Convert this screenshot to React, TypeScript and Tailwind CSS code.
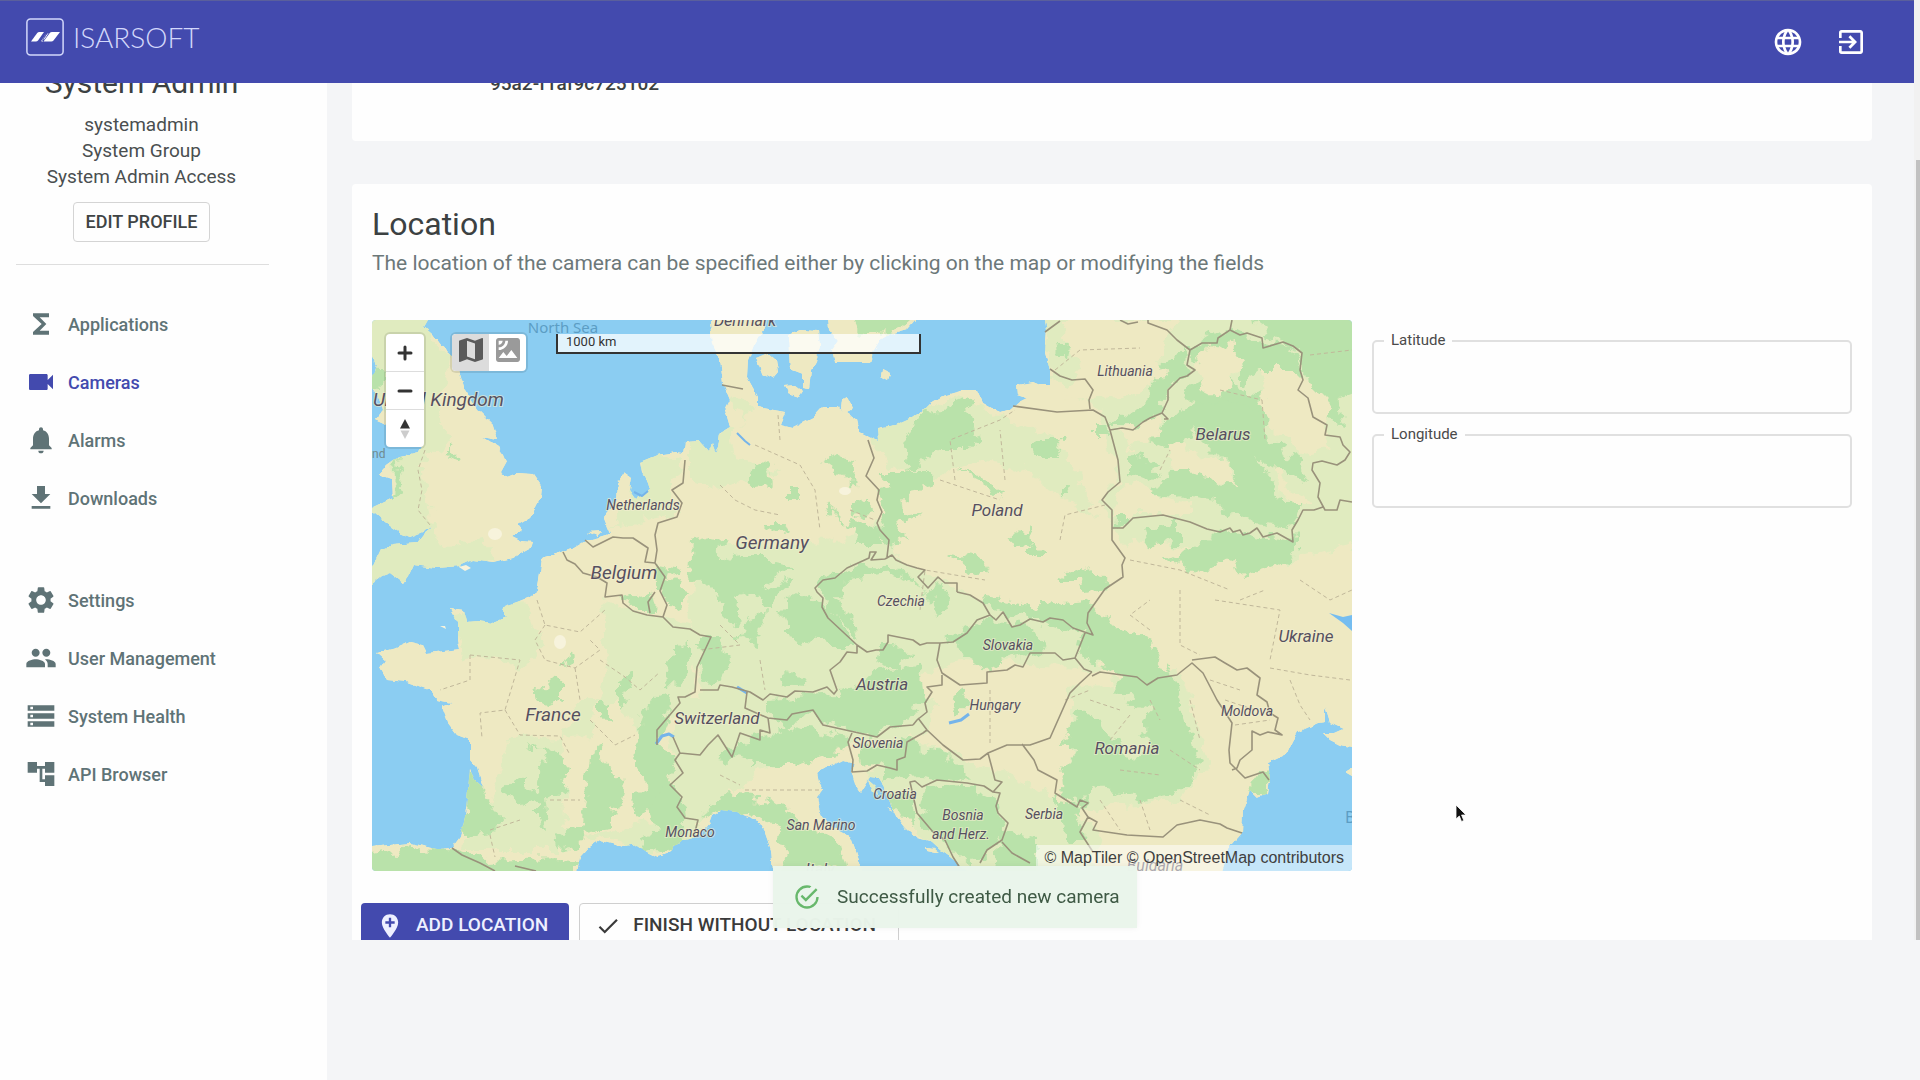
import React from "react";
import type { IconType } from "react-icons";
import {
  MdAccountTree,
  MdCheck,
  MdExitToApp,
  MdFileDownload,
  MdFunctions,
  MdLanguage,
  MdMap,
  MdNotifications,
  MdPeople,
  MdSatellite,
  MdSettings,
  MdStorage,
  MdVideocam,
} from "react-icons/md";

type NavItem = { label: string; icon: IconType; active?: boolean };

const MAIN_NAV: NavItem[] = [
  { label: "Applications", icon: MdFunctions },
  { label: "Cameras", icon: MdVideocam, active: true },
  { label: "Alarms", icon: MdNotifications },
  { label: "Downloads", icon: MdFileDownload },
];

const ADMIN_NAV: NavItem[] = [
  { label: "Settings", icon: MdSettings },
  { label: "User Management", icon: MdPeople },
  { label: "System Health", icon: MdStorage },
  { label: "API Browser", icon: MdAccountTree },
];

function Logo() {
  return (
    <a href="#home" className="flex items-center gap-[9px] text-[#d3d8fb]">
      <svg viewBox="0 0 38 38" className="size-[38px]" fill="none" aria-hidden="true">
        <rect x="0.9" y="0.9" width="36.2" height="36.2" rx="3.5" stroke="currentColor" strokeWidth="1.5" />
        <path d="M5 23.5 11.2 15Q12 14 13.4 14H18L12 22.4Q11.200 23.500 9.800 23.500Z" fill="#fff" />
        <path d="M16.500 23.500Q15.300 23.500 16 22.400L20 16.500M18 21.500 22 15.200" stroke="#fff" strokeWidth="0.9" />
        <path d="M17.500 23.500 23.800 15Q24.500 14 26 14H34L27.500 22.400Q26.700 23.500 25.300 23.500Z" fill="#fff" />
        <path d="M16.500 21.500 21.500 14.500" stroke="#434aae" strokeWidth="1" />
      </svg>
      <span className="font-['Lato'] text-[28px] leading-[38px] font-light">ISARSOFT</span>
    </a>
  );
}

function Header() {
  return (
    <header className="mr-[6px] flex h-[83px] shrink-0 items-center justify-between border-t border-[#5a5f9c] bg-[#434aae] pr-[47px] pl-[26px]">
      <div className="pb-[10px]">
        <Logo />
      </div>
      <div className="flex items-center gap-[31px] text-white">
        <button type="button" aria-label="Language">
          <MdLanguage className="size-8" />
        </button>
        <button type="button" aria-label="Log out">
          <MdExitToApp className="size-8" />
        </button>
      </div>
    </header>
  );
}

function NavList({ items }: { items: NavItem[] }) {
  return (
    <ul>
      {items.map(({ label, icon: Icon, active }) => (
        <li key={label}>
          <a
            href="#nav"
            className={
              active
                ? "flex h-[58px] items-center gap-[11px] text-[#434aae]"
                : "flex h-[58px] items-center gap-[11px] text-[#5f7376]"
            }
          >
            <Icon className="size-8" />
            <span className="text-[18px] font-medium">{label}</span>
          </a>
        </li>
      ))}
    </ul>
  );
}

function Sidebar() {
  return (
    <aside className="w-[327px] shrink-0 overflow-hidden bg-[#fefefe] pr-11">
      <div className="-mt-5 flex flex-col items-center text-[19px] leading-[26px] text-[#4a4f50]">
        <h2 className="text-[30px] leading-10 text-[#3c4142]">System Admin</h2>
        <div className="mt-[9px] text-center">
          <p>systemadmin</p>
          <p>System Group</p>
          <p>System Admin Access</p>
        </div>
        <button
          type="button"
          className="mt-3 h-10 rounded-[4px] border border-[#d4d4d4] px-3 text-[18px] font-medium text-[#3f4445]"
        >
          EDIT PROFILE
        </button>
      </div>
      <hr className="mt-[22px] ml-4 mr-[14px] border-[#dedede]" />
      <nav className="mt-[30px] flex flex-col gap-11 pl-[25px]">
        <NavList items={MAIN_NAV} />
        <NavList items={ADMIN_NAV} />
      </nav>
    </aside>
  );
}

const UK =
  "M355 305H428V320L424 327 432 334 440 345 455 358 460 373 465 390 478 410 493 425 498 440 482 437 490 442 498 447 504 455 507 462 501 473 507 477 517 473 533 474 542 487 541 497 536 507 530 518 518 525 522 530 512 537 520 541 533 542 531 548 513 558 493 563 473 560 460 566 437 568 413 565 408 576 403 583 390 573 382 576 372 584 358 590V567H372L380 550 393 545 417 543 424 534 433 527 420 533 410 537 400 533 390 526 380 518 372 511V508L393 498 392 480 378 475 386 466 397 458 417 453 421 447 414 440 400 436 386 425 375 420 383 410 380 399 372 388V377L376 365 372 356 355 350Z";

const MAINLAND =
  "M710 305V320L712 343 720 360 723 383 730 400 725 410 730 427 720 433 718 447 715 452 712 444 709 451 700 441 685 442 683 453 677 452 657 455 640 462 642 473 648 483 650 490 644 494 637 500 630 490 632 477 625 472 618 483 617 500 603 517 607 527 610 534 600 537 587 540 574 548 563 552 542 558 540 573 537 591 527 598 517 602 505 606 503 612 507 617 493 623 478 621 467 622 464 610 450 608 458 622 458 640 460 649 444 651 427 653 423 645 410 642 397 648 377 653 385 660 380 668 387 680 407 682 430 690 437 700 452 703 442 707 448 723 457 735 470 740 470 760 477 768 483 787 475 780 470 770 467 800 465 817 460 837 452 848 438 849 427 847 410 843 390 845 372 847 355 847V885H577V871L580 857 588 848 600 840 612 843 623 847 637 845 647 852 657 857 670 853 675 845 682 840 700 835 710 823 713 815 720 810 737 812 757 820 765 833 771 850 773 871V885H862V871L860 863 852 840 843 833 833 828 822 817 819 808 817 798 823 790 819 783 817 773 824 768 833 765 843 760 855 763 852 773 855 785 860 793 865 785 870 777 878 778 887 793 892 807 897 817 906 828 917 838 930 841 940 850 950 857 960 865 966 871V885H1222V871L1230 847 1242 833 1243 810 1250 790 1257 797 1268 793 1270 780 1268 762 1287 753 1292 742 1298 732 1318 723 1325 722 1325 707 1330 723 1343 729 1334 733 1323 733 1330 740 1340 745 1352 747H1370V305H1045V320L1047 330 1045 353 1050 370 1050 385 1040 385 1033 382 1028 383 1017 385 1018 395 1027 398 1019 402 1010 410 1000 413 990 407 983 403 977 390 965 390 953 393 940 397 930 403 922 411 913 417 895 425 877 428 878 441 870 437 860 432 857 420 847 413 837 407 823 407 813 418 793 428 780 425 785 412 774 410 758 407 758 397 747 377 748 360 754 345 763 330 767 320V305Z";

const ISLANDS = [
  "M756 358L768 353 776 360 778 372 772 379 762 374Z",
  "M788 335L800 330 818 331 820 345 816 362 811 371 809 389 803 388 803 374 790 369Z",
  "M785 386L795 385 803 391 799 397 788 393Z",
  "M827 305H916V320L908 329 890 334 880 340 874 350 870 362 835 362 832 350 838 342 829 330Z",
  "M882 370L890 374 888 380 881 376Z",
  "M842 400L847 397 853 409 847 413 841 409Z",
  "M588 532L602 531 597 536Z",
  "M868 780L875 786 878 796 872 791ZM887 806L894 813 890 811ZM925 848L935 849 940 853 926 850Z",
  "M1345 772L1352 768H1370V776H1352Z",
];

const LIGHT_GREEN = [
  "M355 305H425L432 340 450 360 445 385 432 400 450 440 440 455 420 450 430 520 445 545 480 540 500 562 355 594V505L395 495 392 455 410 440 380 400Z",
  "M455 615L520 600 545 640 520 670 490 655 465 660Z",
  "M600 600L700 630 690 700 640 735 620 700 580 700 560 740 570 850 460 850 500 770 510 740 590 735 610 660Z",
  "M640 460L683 455 672 490 680 515 610 525 630 500Z",
  "M690 442L730 425 735 460 780 470 720 490 690 480Z",
  "M730 395L752 405 740 425Z",
  "M580 835L700 815 700 840 650 857 620 845Z",
  "M700 540L830 545 880 520 900 560 980 600 1090 620 1100 670 960 660 870 700 700 700 690 630Z",
  "M870 430L960 395 1010 420 1060 440 1100 520 1020 470 980 460 930 480 890 470Z",
  "M1045 305H1380V540L1290 560 1120 540 1100 500 1120 480 1100 410 1050 380Z",
  "M680 700L830 690 940 700 900 760 840 745 760 770 690 830 670 780Z",
  "M860 775L920 740 990 770 1040 790 1100 830 1090 885H970L900 815Z",
  "M1070 690L1180 670 1210 760 1180 800 1070 810Z",
];

const CLEARINGS = [
  "M1060 322L1180 322 1160 345 1165 375 1130 395 1060 400 1080 370Z",
  "M1205 350L1230 340 1240 365 1225 400 1205 390 1195 370ZM1262 370L1295 370 1330 405 1320 430 1330 450 1300 455 1270 425 1265 400Z",
  "M1120 430L1160 415 1155 440 1130 450ZM1170 440L1225 465 1238 485 1200 480 1170 465ZM1125 480L1190 505 1195 515 1110 515ZM1270 465L1310 505 1290 505Z",
];

const FOREST = [
  "M400 430L405 445 398 460 402 490 395 500 396 475ZM448 448L456 452 458 460 448 456ZM360 368L382 372 384 388 360 386Z",
  "M465 772L475 775 490 805 504 820 498 828 462 838Z",
  "M535 690L545 682 562 684 562 703 552 706 536 697Z",
  "M500 788L525 775 525 785 535 790 545 750 530 750 528 748 555 750 568 760 562 790 545 793 548 826 540 820 540 800 520 805Z",
  "M560 663L573 655 575 663 568 667Z",
  "M600 700L610 698 610 718 600 716ZM620 680L632 675 625 710 620 705ZM558 835L575 828 585 830 584 845 560 850Z",
  "M590 750L600 745 605 770 622 785 612 825 580 830 585 800 586 780Z",
  "M645 705L672 693 665 720 655 745 672 760 668 790 660 800 640 820 630 800 645 785 637 760 640 725Z",
  "M675 655L690 640 690 660 680 688 665 687 666 670ZM664 780L682 800 686 830 680 845 660 857 640 845 655 830 650 810Z",
  "M355 855L420 848 450 850 480 860 560 858 577 860V885H355Z",
  "M748 470L767 458 772 480 760 492 745 482ZM823 460L835 450 858 465 855 485 845 480 840 472ZM790 490L800 490 800 500 790 500Z",
  "M763 520L785 520 793 530 775 532ZM818 510L825 500 830 515ZM855 505L870 498 876 515 850 520Z",
  "M690 542L725 535 715 550 745 560 770 560 790 565 760 590 790 580 770 610 745 590 725 605 700 580 688 575Z",
  "M655 565L680 570 665 580 690 590 680 605 665 600ZM620 595L650 590 655 610 640 610Z",
  "M720 600L740 590 735 625 722 615ZM745 620L765 610 760 645 740 640ZM700 640L720 640 727 660 712 690 702 680Z",
  "M785 600L800 590 835 615 855 645 825 645 785 635ZM790 635L780 610 790 600Z",
  "M878 490L920 478 900 500 920 515 895 525 910 540 890 545 877 530 885 505ZM820 500L840 520 875 525 885 545 850 545 855 530Z",
  "M900 440L920 420 960 400 975 395 970 410 980 440 965 450 935 450 920 470 905 475 910 455ZM880 475L925 475 938 485 900 492Z",
  "M960 470L985 475 1008 495 1005 500 980 480ZM950 555L985 560 990 570 975 575ZM1010 535L1028 528 1030 550 1015 545Z",
  "M817 585L835 575 860 565 900 568 925 590 940 585 950 600 935 620 930 590 890 575 850 580 835 600 855 620 860 640 830 610Z",
  "M880 645L910 650 900 670 875 660ZM785 670L810 672 805 690 780 688Z",
  "M770 700L835 695 880 670 920 665 925 700 910 720 870 735 825 720 810 712 780 730 770 715ZM840 690L900 685 890 710 840 710Z",
  "M745 740L770 735 800 725 850 738 845 748 790 765 750 765 720 760Z",
  "M855 745L905 745 900 770 875 762 860 768ZM905 740L950 755 975 780 920 775 880 780Z",
  "M700 820L730 795 770 800 810 830 840 840 850 885H775L790 850 768 820 735 810Z",
  "M925 790L960 785 995 800 998 815 1008 825 985 850 970 868 940 840 920 815ZM890 795L910 800 915 830 900 815Z",
  "M945 640L985 620 1030 625 1045 650 1010 660 985 670 960 650ZM980 595L1030 605 1085 600 1090 625 1070 630 1020 615 990 610ZM960 690L968 700 955 715Z",
  "M1080 605L1110 620 1145 640 1170 675 1185 720 1190 750 1200 755 1195 780 1165 795 1140 800 1120 790 1090 785 1080 806 1062 795 1060 770 1075 755 1063 740 1080 710 1100 720 1110 740 1130 760 1150 755 1145 720 1150 705 1110 690 1120 680 1080 650 1085 630Z",
  "M1056 800L1075 805 1085 840 1070 840 1058 825ZM1000 830L1040 840 1040 885H990Z",
  "M1056 345L1070 345 1068 360 1058 355ZM1135 340L1142 345 1138 352ZM1165 360L1180 355 1190 345 1185 370 1170 390 1160 415 1135 425 1110 425 1130 410 1150 390ZM1095 425L1110 425 1112 435 1095 435Z",
  "M1190 350L1230 325 1260 340 1290 345 1300 360 1298 385 1275 385 1260 370 1240 385 1240 360 1225 345 1200 370ZM1195 380L1225 370 1245 395 1270 400 1265 430 1220 415 1200 410 1185 395Z",
  "M1205 400L1260 410 1265 440 1300 460 1310 480 1275 470 1260 460 1280 500 1300 500 1290 530 1240 520 1215 500 1150 490 1170 470 1190 470 1220 485 1235 475 1190 430 1175 450 1150 440 1170 420Z",
  "M1130 455L1160 465 1155 480 1130 470ZM1232 305H1380V380L1330 400 1305 390 1300 350 1270 335ZM1310 400L1340 390 1345 430 1320 420Z",
  "M1145 530L1180 520 1180 540 1150 548ZM1165 560L1200 545 1220 530 1290 540 1300 530 1300 550 1270 570 1240 580 1235 560 1200 570ZM1117 512L1128 508 1130 520 1115 528Z",
  "M1055 580L1075 565 1100 575 1110 588 1090 590 1075 580ZM1030 440L1065 440 1060 455 1035 455ZM1060 487L1072 487 1070 495 1060 495ZM1030 540L1045 555 1030 555Z",
  "M1250 780L1268 775 1268 793 1255 793Z",
  "M845 305H912V320L900 330 860 336Z",
];

const BORDERS =
  "M722 385L743 389M868 440L874 458 866 476 879 490 877 500 882 512 877 523 880 530 889 540 887 557M885 559L871 560 876 552 870 552 869 558 847 568 835 578 823 580 815 588 817 592 823 598 822 607 828 618 857 645 867 652 876 650 883 650 888 642 888 635 913 640 920 645 927 643 940 643 953 642 967 633 977 620 990 615 983 603 970 595 957 592M885 559L892 555 896 560 907 565 917 568 925 570 918 577 928 588 938 577 945 583 957 583 957 592M990 615L996 620 1003 612 1012 627 1020 625 1030 619 1043 622 1050 618 1063 620 1073 628 1093 635 1087 623 1088 613 1105 589 1123 577 1122 565 1125 558 1112 540 1112 510 1102 500 1108 492 1120 482 1118 460 1110 430 1105 417 1093 410 1057 412 1013 406M1050 369L1060 376 1072 380 1085 379 1093 390 1089 400 1090 409M1110 430L1122 428 1133 430 1143 422 1150 418 1162 413 1168 400 1168 390 1180 378 1187 376 1195 370 1187 365 1190 350 1177 340 1167 330 1148 323V320M1162 413L1168 419 1164 419M1190 350L1202 343 1217 343 1218 338 1230 330 1232 320M1230 330L1240 335 1247 333 1262 338 1263 348 1283 342 1293 346 1302 353 1300 370 1303 380 1298 390 1308 398 1313 417 1327 425 1325 435 1340 437 1343 445 1350 452 1345 460 1337 465 1322 461 1313 463 1312 470 1320 483 1318 497 1325 510 1337 510 1340 500 1352 502M1323 507L1314 510 1303 510 1298 520 1292 530 1293 542 1277 533 1263 537 1257 528 1250 533 1243 535 1240 530 1233 532 1230 528 1220 532 1207 529 1190 522 1163 515 1133 518 1123 528 1112 528M1120 320L1128 324 1138 322M1045 332L1060 321M1085 633L1075 658 1084 669 1092 672M1075 658L1063 660 1055 653 1030 653 1023 667 1015 665 1007 670 987 672 987 683 960 685 942 673 937 660 940 643M942 675L942 685 927 687 932 692 925 703 927 712 917 720 913 725M1092 672L1080 683 1070 693 1050 738 1030 745 1007 745 988 753 980 759 963 760 943 745 927 730 918 718M1092 676L1100 672 1137 677 1147 685 1158 678 1177 675 1192 663 1203 673 1217 700 1232 723 1229 750 1230 763 1245 778 1263 772 1269 780M1192 660L1215 657 1225 663 1237 670 1247 668 1260 678 1257 695 1267 702 1270 713 1278 718 1275 730 1282 735 1268 732 1260 735 1252 731 1252 750 1240 760 1237 768 1232 770M1022 744L1034 760 1038 770 1057 780 1055 793 1077 807 1080 800 1088 803 1082 808 1088 817 1097 822 1093 830 1127 835 1163 837 1177 825 1200 820 1220 824 1227 828 1242 833M1088 817L1080 832 1093 852M988 753L992 768 995 780 1002 782 993 792 984 786 967 783 937 780 922 787 915 781 910 782 917 813 933 832 945 840 953 857 960 868M993 792L1000 793 996 806 998 813 1008 823 1002 840 987 850 980 863M1002 842L1012 853 1030 863M857 645L857 653 847 652 840 662 830 670 837 690 834 694 827 687 813 692 795 691 787 697 770 694 763 700 750 692 732 687 720 685 718 690 700 690M747 692L745 708 768 718 787 720 792 714 813 710 823 725 877 737 890 727 913 725M852 733L848 742 853 760 852 772 867 771 877 765 890 768 897 770 897 760 905 757 907 742 923 733 927 730M768 718L770 733 760 730 760 740 740 733 732 757 718 735 708 745 700 755 680 753 673 737M657 745L657 730 680 703 678 697 685 697 695 692 697 667 711 637 700 635 690 629 673 627 663 617 647 615 633 611 623 603 622 595 605 597 607 583 597 577 583 573 575 564 567 560 563 552M585 540L593 547 613 537 623 538 633 538 648 548 645 562 655 563 657 550 655 535 658 523 677 517 682 503 672 490 683 483 685 460M655 563L665 577 660 591 667 605 663 617M655 592L648 602 650 613M680 753L675 760 683 773 670 785 682 797 677 807 685 818 698 820 695 832M452 848L462 855 480 863 495 871M515 866L536 871";

const REGIONS =
  "M425 450L418 470 422 490 418 510 430 525M470 655L470 680 440 690M470 655L520 660 505 710 480 713 482 738M537 600L545 625 580 632 605 610M545 625L535 640 545 660 575 668 600 650 590 640M575 668L580 700M505 710L520 735 560 736 570 755M590 720L615 745 635 735M600 660L625 677 640 690 660 672M490 835L495 857M490 830L520 820M550 800L580 800M720 485L735 500 755 510 780 515M755 445L800 465 815 490 820 530M780 440L778 415M760 660L765 690M720 625L740 645 700 650M850 510L875 520M940 480L970 490 1000 500M955 480L950 440 1000 420 1015 410M1005 480L1000 430M920 610L925 570 985 580M1060 540L1065 515 1105 505M1130 560L1180 570 1230 590M1180 590V645L1200 655M1150 630L1130 615 1150 600M1215 600L1280 610 1270 660M1270 668L1310 675 1350 680M1290 680L1300 705 1310 720M1240 600L1265 590M1300 580L1330 600 1352 590M1220 390L1262 400M1262 400L1265 440M1160 470L1170 450M1310 355L1352 350M1055 370L1080 350 1140 348M1090 700L1120 710M1065 700L1090 690M1110 740L1130 715M1150 700L1160 720M1190 700L1200 740M1170 750L1200 770M1120 770L1160 775M1100 800L1120 830M1140 800L1150 830M1180 800L1210 815M1210 680L1240 690M1225 700L1255 710M1235 725L1270 720M745 790H800L820 790M720 775L740 785M990 690V745";

type MapLabel = { text: string; x: number; y: number; size: number; anchor?: "end" };

const LABELS: MapLabel[] = [
  { text: "United Kingdom", x: 504, y: 406, size: 19, anchor: "end" },
  { text: "Denmark", x: 745, y: 326, size: 16 },
  { text: "Netherlands", x: 643, y: 510, size: 14 },
  { text: "Belgium", x: 624, y: 579, size: 19 },
  { text: "Germany", x: 772, y: 549, size: 19 },
  { text: "Poland", x: 997, y: 516, size: 17 },
  { text: "Czechia", x: 901, y: 606, size: 14 },
  { text: "Lithuania", x: 1125, y: 376, size: 14 },
  { text: "Belarus", x: 1223, y: 440, size: 17 },
  { text: "Ukraine", x: 1306, y: 642, size: 17 },
  { text: "Moldova", x: 1247, y: 716, size: 14 },
  { text: "Romania", x: 1127, y: 754, size: 17 },
  { text: "Hungary", x: 995, y: 710, size: 14 },
  { text: "Slovakia", x: 1008, y: 650, size: 14 },
  { text: "Austria", x: 882, y: 690, size: 17 },
  { text: "Slovenia", x: 878, y: 748, size: 14 },
  { text: "Croatia", x: 895, y: 799, size: 14 },
  { text: "Bosnia", x: 963, y: 820, size: 14 },
  { text: "and Herz.", x: 961, y: 839, size: 14 },
  { text: "Serbia", x: 1044, y: 819, size: 14 },
  { text: "San Marino", x: 821, y: 830, size: 14 },
  { text: "Monaco", x: 690, y: 837, size: 14 },
  { text: "Switzerland", x: 717, y: 724, size: 17 },
  { text: "France", x: 553, y: 721, size: 19 },
  { text: "Italy", x: 820, y: 875, size: 16 },
  { text: "Bulgaria", x: 1155, y: 871, size: 16 },
];

function EuropeMap() {
  return (
    <svg
      viewBox="372 320 980 551"
      preserveAspectRatio="xMidYMid slice"
      className="block h-full w-full"
      role="img"
      aria-label="Map of central Europe"
    >
      <defs>
        <filter id="rough" x="0" y="0" width="1" height="1">
          <feTurbulence type="fractalNoise" baseFrequency="0.06" numOctaves="3" seed="4" />
          <feDisplacementMap in="SourceGraphic" scale="22" xChannelSelector="R" yChannelSelector="G" />
        </filter>
        <filter id="coast" x="0" y="0" width="1" height="1">
          <feTurbulence type="fractalNoise" baseFrequency="0.12" numOctaves="2" seed="9" />
          <feDisplacementMap in="SourceGraphic" scale="5" xChannelSelector="R" yChannelSelector="G" />
        </filter>
        <clipPath id="land">
          <path d={UK} />
          <path d={MAINLAND} />
          {ISLANDS.map((d) => (
            <path key={d} d={d} />
          ))}
        </clipPath>
      </defs>
      <rect x="372" y="320" width="980" height="551" fill="#8bcdf2" />
      <g filter="url(#coast)">
        <rect x="340" y="290" width="1050" height="620" fill="#8bcdf2" />
        <g clipPath="url(#land)">
          <rect x="340" y="290" width="1050" height="620" fill="#eee9c2" />
          <g filter="url(#rough)">
            <rect x="340" y="290" width="1050" height="620" fill="#eee9c2" />
            <g fill="#dcecbf" opacity="0.75">
              {LIGHT_GREEN.map((d) => (
                <path key={d} d={d} />
              ))}
            </g>
            <g fill="#b9e2aa">
              {FOREST.map((d) => (
                <path key={d} d={d} />
              ))}
            </g>
            <g fill="#eee9c2">
              {CLEARINGS.map((d) => (
                <path key={d} d={d} />
              ))}
            </g>
          </g>
        </g>
      </g>
      <g fill="#f7f3dc">
        <ellipse cx="495" cy="534" rx="7" ry="6" />
        <ellipse cx="560" cy="642" rx="6" ry="7" />
        <ellipse cx="845" cy="491" rx="6" ry="4" />
        <path d="M459 567l7-2 5 3-6 3zM440 626l5 0 1 3z" />
      </g>
      <g fill="none" stroke="#75b4ea" strokeWidth="3" strokeLinejoin="round">
        <path d="M656 744l6-8 7-2 5 3M737 687l10 6M949 723l12-3 8-6" />
        <path d="M737 433l8 8 5 4M634 492l8 4 6-5" strokeWidth="2" />
      </g>
      <path d="M1329 613l14 4 9-2v16l-9-8z" fill="#75bdf0" />
      <path d={REGIONS} fill="none" stroke="#c0b79a" strokeWidth="1" strokeDasharray="4 3" />
      <path d={BORDERS} fill="none" stroke="#99927b" strokeWidth="1.600" strokeLinejoin="round" />
      <text x="563" y="333" textAnchor="middle" fontSize="15" fill="#5c9dc4" className="font-['Noto_Sans']">
        North Sea
      </text>
      <text x="372" y="458" fontSize="12" fill="#6f8a90" className="font-['Roboto']">
        nd
      </text>
      <text x="1345" y="823" fontSize="16" fill="#5c9dc4" className="font-['Noto_Sans']">
        Black Sea
      </text>
      <g
        className="font-['Roboto'] italic"
        fill="#565060"
        stroke="#f3efd0"
        strokeWidth="2"
        strokeOpacity="0.6"
        paintOrder="stroke"
      >
        {LABELS.map((l) => (
          <text key={l.text} x={l.x} y={l.y} fontSize={l.size} textAnchor={l.anchor ?? "middle"}>
            {l.text}
          </text>
        ))}
      </g>
    </svg>
  );
}

function MapPanel() {
  return (
    <div className="relative h-[551px] min-w-0 flex-1 overflow-hidden rounded-[4px]">
      <EuropeMap />
      <div className="absolute top-[14px] left-[14px] flex w-[38px] flex-col divide-y divide-[#dddddd] rounded-[4px] bg-white text-[#333333] shadow-[0_0_0_2px_rgba(0,0,0,0.1)]">
        <button type="button" aria-label="Zoom in" className="flex h-[38px] items-center justify-center">
          <svg viewBox="0 0 16 16" className="size-4" stroke="currentColor" strokeWidth="3" strokeLinecap="round">
            <path d="M8 2v12M2 8h12" />
          </svg>
        </button>
        <button type="button" aria-label="Zoom out" className="flex h-[38px] items-center justify-center">
          <svg viewBox="0 0 16 16" className="size-4" stroke="currentColor" strokeWidth="3" strokeLinecap="round">
            <path d="M2 8h12" />
          </svg>
        </button>
        <button type="button" aria-label="Reset bearing to north" className="flex h-[37px] items-center justify-center">
          <svg viewBox="0 0 12 24" className="h-6 w-3">
            <path d="M6 2l5 9.500H1z" fill="#333333" />
            <path d="M6 22l4.500-8.500h-9z" fill="#cccccc" />
          </svg>
        </button>
      </div>
      <div className="absolute top-[14px] left-[80px] flex overflow-hidden rounded-[4px] bg-white shadow-[0_0_0_2px_rgba(0,0,0,0.1)]">
        <button type="button" aria-label="Street map" className="flex h-[37px] w-[37px] items-center justify-center bg-[#dcdcdc] pb-[5px] text-[#5a5a5a]">
          <MdMap className="size-8" />
        </button>
        <button type="button" aria-label="Satellite" className="flex h-[37px] w-[37px] items-center justify-center pb-[5px] text-[#9a9a9a]">
          <MdSatellite className="size-8" />
        </button>
      </div>
      <div className="absolute top-[14px] left-[184px] h-5 w-[365px] border-2 border-t-0 border-[#333333] bg-white/75 pl-2 text-[13px] leading-4 text-[#333333]">
        1000 km
      </div>
      <div className="absolute right-0 bottom-0 bg-white/50 px-2 font-['Liberation_Sans'] text-[16px] leading-[26px] text-[#404040]">
        <a href="#maptiler">© MapTiler</a> <a href="#osm">© OpenStreetMap contributors</a>
      </div>
    </div>
  );
}

function CoordinateField({ id, label }: { id: string; label: string }) {
  return (
    <div className="relative">
      <label htmlFor={id} className="absolute -top-[10px] left-3 bg-[#fefefe] px-[7px] text-[15px] leading-5 text-[#4a4a4a]">
        {label}
      </label>
      <input
        id={id}
        type="text"
        className="block h-[74px] w-full rounded-[5px] border-2 border-[#e0e0e0] bg-transparent px-4 text-[18px]"
      />
    </div>
  );
}

function LocationCard() {
  return (
    <section className="rounded-[4px] bg-[#fefefe] px-[9px]">
      <div className="px-[11px] pt-5">
        <h1 className="text-[32px] leading-10 text-[#3c4142]">Location</h1>
        <p className="mt-1 text-[21px] leading-[30px] text-[#6c7879]">
          The location of the camera can be specified either by clicking on the map or modifying the fields
        </p>
        <div className="mt-[42px] flex gap-5">
          <MapPanel />
          <div className="flex w-[480px] shrink-0 flex-col gap-5 pt-5">
            <CoordinateField id="latitude" label="Latitude" />
            <CoordinateField id="longitude" label="Longitude" />
          </div>
        </div>
      </div>
      <div className="mt-8 flex gap-[10px] pb-6">
        <button
          type="button"
          className="flex h-[45px] items-center gap-3 rounded-[4px] bg-[#434aae] pr-[21px] pl-[15px] text-[19px] font-medium text-[#eef0ff]"
        >
          <svg viewBox="0 0 24 24" className="size-7" fill="currentColor" aria-hidden="true">
            <path
              fillRule="evenodd"
              d="M12 2C8 2 5 5 5 9c0 5.200 7 13 7 13s7-7.800 7-13c0-4-3-7-7-7zm4 8h-3v3h-2v-3H8V8h3V5h2v3h3v2z"
            />
          </svg>
          ADD LOCATION
        </button>
        <button
          type="button"
          className="flex h-[45px] items-center gap-3 rounded-[4px] border border-[#cfcfcf] pr-[22px] pl-[15px] text-[19px] font-medium text-[#3a3a3a]"
        >
          <MdCheck className="size-[26px]" />
          FINISH WITHOUT LOCATION
        </button>
      </div>
    </section>
  );
}

function Toast() {
  return (
    <div
      role="status"
      className="fixed top-[866px] left-[773px] flex h-[62px] items-center gap-4 bg-[#eaf5eb]/98 pr-[17px] pl-5 text-[19px] text-[#3f5a45] shadow-[0_0_6px_rgba(0,0,0,0.06)]"
    >
      <svg viewBox="0 0 24 24" className="size-7" fill="#68b86c" aria-hidden="true">
        <path d="M20,12A8,8 0 0,1 12,20A8,8 0 0,1 4,12A8,8 0 0,1 12,4C12.76,4 13.5,4.11 14.2,4.31L15.77,2.74C14.61,2.26 13.34,2 12,2A10,10 0 0,0 2,12A10,10 0 0,0 12,22A10,10 0 0,0 22,12M7.91,10.08L6.5,11.5L11,16L21,6L19.59,4.58L11,13.17L7.91,10.08Z" />
      </svg>
      Successfully created new camera
    </div>
  );
}

function Pointer() {
  return (
    <svg viewBox="0 0 12 19" className="pointer-events-none fixed top-[804px] left-[1455px] h-[19px] w-3" aria-hidden="true">
      <path d="M1 1v14l3.300-3 2.200 5.500 2.300-1L6.600 11H11z" fill="#111" stroke="#fff" strokeWidth="0.800" />
    </svg>
  );
}

export default function App() {
  return (
    <div className="relative flex h-screen flex-col overflow-hidden bg-[#f4f5f7] font-['Roboto',sans-serif]">
      <Header />
      <div className="flex min-h-0 flex-1">
        <Sidebar />
        <main className="flex min-w-0 flex-1 flex-col pr-12 pb-[140px] pl-[25px]">
          <div className="flex min-h-0 flex-1 flex-col gap-[43px] overflow-hidden">
            <section className="flex h-[58px] shrink-0 items-start rounded-b-[4px] bg-[#fefefe] pl-[138px]">
              <p className="-mt-[11px] text-[19px] leading-6 font-medium text-[#3c4142]">95a2-f1af9c725102</p>
            </section>
            <LocationCard />
          </div>
        </main>
      </div>
      <div className="absolute top-0 right-0 bottom-[140px] w-[6px] bg-[#f1f1f1] pt-[160px]">
        <div className="ml-[2px] h-full bg-[#c1c1c1]" />
      </div>
      <Toast />
      <Pointer />
    </div>
  );
}
